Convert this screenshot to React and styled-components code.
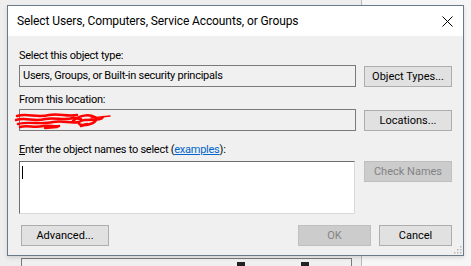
import React from "react";
import styled, { createGlobalStyle } from "styled-components";

const GlobalStyle = createGlobalStyle`
  html, body {
    margin: 0;
    padding: 0;
    background: #f6f6f6;
    font-family: "Segoe UI", Roboto, "Liberation Sans", sans-serif;
  }
`;

const Desktop = styled.div`
  position: relative;
  width: 471px;
  height: 266px;
  overflow: hidden;
`;

// window that sits behind the dialog
const BackWindow = styled.div`
  width: 362px;
  height: 266px;
  background: #eeeeee;
  border-right: 1px solid #b9b9b9;
  box-sizing: border-box;
  display: flex;
  flex-direction: column;
  justify-content: flex-end;
  padding: 0 9px 0 21px;
`;

const BackList = styled.div`
  height: 8px;
  border: 1px solid #7a7a7a;
  border-bottom: none;
  background: #f0f0f0;
  display: flex;
  gap: 56px;
  padding: 3px 0 0 215px;
  box-sizing: border-box;

  span {
    width: 8px;
    height: 5px;
    background: #222;
  }
`;

const Dialog = styled.div`
  position: absolute;
  left: 7px;
  top: 5px;
  width: 457px;
  height: 251px;
  box-sizing: border-box;
  border: 1px solid #6b7a89;
  background: #f0f0f0;
  box-shadow: 0 2px 4px rgba(0, 0, 0, 0.12);
  display: flex;
  flex-direction: column;
`;

const TitleBar = styled.div`
  height: 30px;
  background: #fff;
  display: flex;
  align-items: center;
  justify-content: space-between;
  padding: 0 10px 0 9px;
  font-size: 12px;
  letter-spacing: -0.1px;
  color: #000;
`;

const Body = styled.div`
  flex: 1;
  display: flex;
  flex-direction: column;
  padding: 0 11px;
  font-size: 11px;
  letter-spacing: -0.25px;
  color: #000;
  position: relative;
`;

const Label = styled.div`
  height: 15px;
  line-height: 15px;
  margin-top: ${(p) => p.$top}px;
  white-space: nowrap;

  u {
    text-decoration: underline;
  }

  a {
    color: #0066cc;
    text-decoration: underline;
  }
`;

const Row = styled.div`
  display: flex;
  align-items: ${(p) => (p.$top ? "flex-start" : "center")};
  justify-content: space-between;
  margin-top: ${(p) => p.$mt}px;
`;

const Field = styled.div`
  width: 337px;
  height: 22px;
  box-sizing: border-box;
  border: 1px solid #7a7a7a;
  background: #f0f0f0;
  padding: 0 3px;
  line-height: 20px;
  white-space: nowrap;
  position: relative;
`;

const TextArea = styled.div`
  width: 336px;
  height: 53px;
  box-sizing: border-box;
  background: #fff;
  border-top: 1px solid #6e6e6e;
  border-left: 1px solid #6e6e6e;
  border-right: 1px solid #d9d9d9;
  border-bottom: 1px solid #d9d9d9;
  padding: 4px 2px;

  i {
    display: block;
    width: 1px;
    height: 13px;
    background: #000;
  }
`;

const Button = styled.div`
  width: ${(p) => p.$w || 88}px;
  height: 21px;
  box-sizing: border-box;
  border: 1px solid ${(p) => (p.$disabled ? "#bfbfbf" : "#adadad")};
  background: ${(p) => (p.$disabled ? "#cccccc" : "#e1e1e1")};
  color: ${(p) => (p.$disabled ? "#838383" : "#000")};
  display: flex;
  align-items: center;
  justify-content: center;
  white-space: nowrap;
  flex-shrink: 0;
  letter-spacing: 0;
`;

const Footer = styled.div`
  display: flex;
  align-items: center;
  gap: 8px;
  margin-top: 11px;
  padding-left: 2px;

  & > :first-child {
    margin-right: auto;
  }
`;

const Grip = styled.svg`
  position: absolute;
  right: 1px;
  bottom: 1px;
`;

const Scribble = styled.svg`
  position: absolute;
  left: -5px;
  top: 2px;
  overflow: visible;
`;

const CloseIcon = () => (
  <svg width="11" height="11" viewBox="0 0 11 11">
    <path d="M0.5 0.5L10.5 10.5M10.5 0.5L0.5 10.5" stroke="#000" strokeWidth="1" />
  </svg>
);

const App = () => {
  return (
    <>
      <GlobalStyle />
      <Desktop>
        <BackWindow>
          <BackList>
            <span />
            <span />
          </BackList>
        </BackWindow>
        <Dialog>
          <TitleBar>
            <span>Select Users, Computers, Service Accounts, or Groups</span>
            <CloseIcon />
          </TitleBar>
          <Body>
            <Label $top={12}>Select this object type:</Label>
            <Row $mt={2}>
              <Field>Users, Groups, or Built-in security principals</Field>
              <Button>Object Types...</Button>
            </Row>
            <Label $top={5}>From this location:</Label>
            <Row $mt={2}>
              <Field>
                <Scribble width="100" height="20" viewBox="0 0 100 20">
                  <g fill="none" stroke="#ff0000" strokeWidth="2.5" strokeLinecap="round" strokeLinejoin="round">
                    <path d="M2 4 C12 1 22 6 34 3 C44 1 52 5 62 3" />
                    <path d="M1 8 C10 5 20 10 30 7 C40 5 50 9 58 6 L66 7" />
                    <path d="M3 12 C14 9 26 13 38 10 C48 8 56 12 64 10" />
                    <path d="M5 15 C12 13 20 16 28 14 C34 13 40 15 44 14" />
                    <path d="M30 16 L42 15" />
                    <path d="M58 9 C64 3 74 2 80 5 C84 8 78 13 68 13 C62 13 62 9 70 8 C78 7 86 9 88 5" />
                    <path d="M76 6 L95 4" strokeWidth="1.5" />
                    <path d="M66 14 L72 12" />
                  </g>
                </Scribble>
              </Field>
              <Button>Locations...</Button>
            </Row>
            <Label $top={11}>
              <u>E</u>nter the object names to select (<a>examples</a>):
            </Label>
            <Row $mt={4} $top>
              <TextArea>
                <i />
              </TextArea>
              <Button $disabled>Check Names</Button>
            </Row>
            <Footer>
              <Button>Advanced...</Button>
              <Button $w={73} $disabled>OK</Button>
              <Button $w={73}>Cancel</Button>
            </Footer>
            <Grip width="8" height="8" viewBox="0 0 8 8">
              <g fill="#b8b8b8">
                <rect x="6" y="0" width="1.5" height="1.5" />
                <rect x="3" y="3" width="1.5" height="1.5" />
                <rect x="6" y="3" width="1.5" height="1.5" />
                <rect x="0" y="6" width="1.5" height="1.5" />
                <rect x="3" y="6" width="1.5" height="1.5" />
                <rect x="6" y="6" width="1.5" height="1.5" />
              </g>
            </Grip>
          </Body>
        </Dialog>
      </Desktop>
    </>
  );
};

export default App;
